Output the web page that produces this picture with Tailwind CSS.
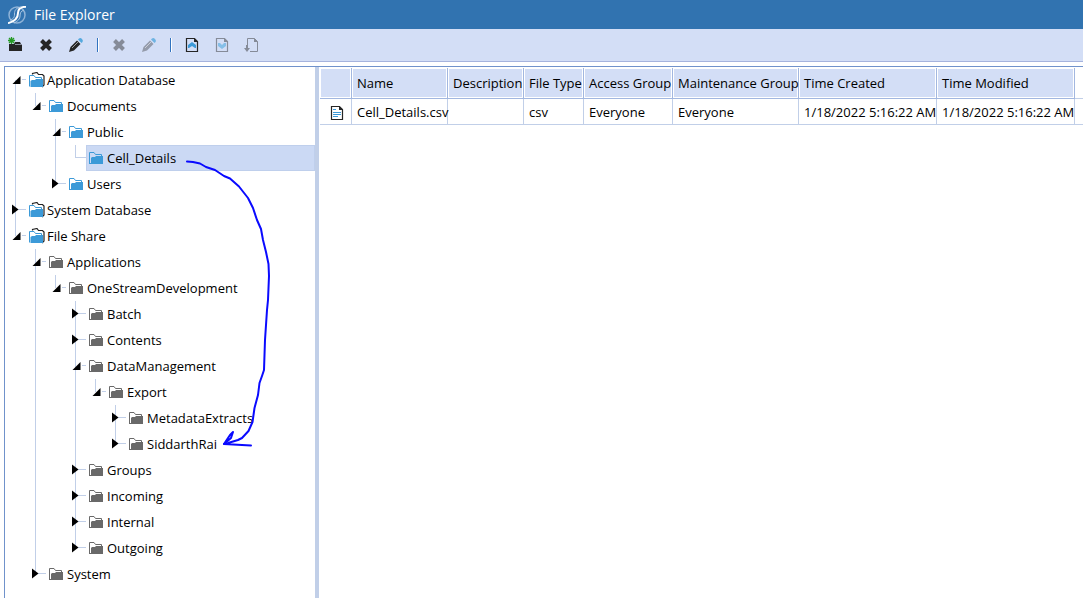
<!DOCTYPE html>
<html lang="en">

<head>
  <meta charset="UTF-8" />
  <meta name="viewport" content="width=device-width, initial-scale=1.0" />
  <title>File Explorer</title>
  <script src="https://cdn.jsdelivr.net/npm/@tailwindcss/browser@4"></script>
</head>

<body class="relative flex flex-col h-screen overflow-hidden bg-white text-black text-[13px] font-['Open_Sans','Noto_Sans',sans-serif]">
  <!-- shared icons -->
  <svg class="hidden">
    <symbol id="folder" viewBox="0 0 16 16">
      <path d="M.5 14V2.500H5L6.500 4.500H12.500V6M0 13.500h2" fill="none" stroke="currentColor" />
      <path d="M3 7h3l1-1h7v8H2V8z" fill="currentColor" />
    </symbol>
    <symbol id="folder-root" viewBox="0 0 16 16">
      <path d="M3.500 2.500V1.500L8 .5l1.500 2h4L15 4v9l-2 2" fill="none" stroke="#222" stroke-width="1.200" />
      <path d="M.5 14.500V3.500H5L6.500 5.500h6V8" fill="#fff" stroke="#3c9ad8" />
      <path d="M3 8h3l1-1h7v8H1.500V9z" fill="#3c9ad8" />
    </symbol>
    <symbol id="cross" viewBox="0 0 16 16">
      <path d="M3.500 3.500l9 9M12.500 3.500l-9 9" stroke="currentColor" stroke-width="4" />
    </symbol>
    <symbol id="pencil" viewBox="0 0 16 16">
      <path d="M1 15l1.500-5L9 3.500l3.500 3.500L6 13.500z" fill="currentColor" />
      <path d="M4 11l6-6" stroke="#fff" stroke-opacity=".55" />
      <path d="M10 2.500l1-1q1.500-1 3 .5t.500 3l-1 1z" fill="#55a9de" />
    </symbol>
    <symbol id="page" viewBox="0 0 16 16">
      <path d="M2.500 1.500h8l3 3v10h-11z" fill="none" stroke="currentColor" stroke-width="1.200" />
      <path d="M10 1v4h4z" fill="currentColor" />
    </symbol>
    <symbol id="open" viewBox="0 0 14 26">
      <path d="M10 12.500h4" stroke="#c1cfe8" />
      <path d="M8.500 9v8H.5z" />
    </symbol>
    <symbol id="closed" viewBox="0 0 14 26">
      <path d="M5 12.500h9" stroke="#c1cfe8" />
      <path d="M0 7.500v10l6.500-5z" />
    </symbol>
    <symbol id="leaf" viewBox="0 0 14 26">
      <path d="M3 12.500h11" stroke="#c1cfe8" />
    </symbol>
  </svg>

  <header class="flex items-center gap-2 h-[29px] shrink-0 pl-2 bg-[#3173b0] text-white">
    <svg class="w-[18px] h-[18px]" viewBox="0 0 18 18" fill="none">
      <circle cx="9" cy="9" r="8" stroke="#8fb3d7" stroke-width="1.500" />
      <path d="M18 .8C12 .8 10 3 10 7S8 15 0 17.200" stroke="#fff" stroke-width="2" />
      <path d="M13 1C8 2 6.500 4 6.500 8s-1.500 5-4.500 6M16 4c-3 1-4 3-4 6s-2 5-6 7" stroke="#a9c6e2" />
    </svg>
    <h1 class="text-[14px] leading-5">File Explorer</h1>
  </header>

  <div class="flex items-center h-[33px] shrink-0 pl-px bg-[#d3def6] border-b border-[#a6b3dd] text-[#252525]" role="toolbar" aria-label="File actions">
    <button class="flex w-[30px] justify-center" aria-label="New folder">
      <svg class="w-4 h-4" viewBox="0 0 16 16">
        <path d="M1 14V7h5l1-2h5l1 2h1v7z" fill="currentColor" />
        <path d="M7 7.500h7" stroke="#d3def6" stroke-width=".6" />
        <path d="M3.500 0v7M0 3.500h7M1 1l5 5M6 1L1 6" stroke="#259a25" stroke-width="1.300" />
      </svg>
    </button>
    <button class="flex w-[30px] justify-center" aria-label="Delete folder"><svg class="w-4 h-4"><use href="#cross" /></svg></button>
    <button class="flex w-[30px] justify-center" aria-label="Rename folder"><svg class="w-4 h-4"><use href="#pencil" /></svg></button>
    <span class="h-[14px] w-[2px] ml-[6px] mr-[5px] border-l border-[#3173c0] bg-white"></span>
    <button class="flex w-[30px] justify-center text-[#858b98]" aria-label="Delete file"><svg class="w-4 h-4"><use href="#cross" /></svg></button>
    <button class="flex w-[30px] justify-center text-[#858b98]" aria-label="Rename file"><svg class="w-4 h-4 opacity-80"><use href="#pencil" /></svg></button>
    <span class="h-[14px] w-[2px] ml-[6px] mr-[5px] border-l border-[#3173c0] bg-white"></span>
    <button class="flex w-[30px] justify-center" aria-label="Upload file">
      <svg class="w-4 h-4"><use href="#page" /><path d="M4 10V8l4-3 4 3v3H11L8 9l-3 2H4z" fill="#3c9ad8" /></svg>
    </button>
    <button class="flex w-[30px] justify-center text-[#858b98]" aria-label="Download file">
      <svg class="w-4 h-4"><use href="#page" /><path d="M4 6h2l2 2 2-2h2v3l-4 3-4-3z" fill="#85bfe8" /></svg>
    </button>
    <button class="flex w-[30px] justify-center text-[#858b98]" aria-label="Download zipped file">
      <svg class="w-4 h-4" viewBox="0 0 16 16">
        <path d="M3.500 8V1.500h7l3 3v10H6" fill="none" stroke="currentColor" />
        <path d="M10 1v4h4zM2 8h2v3h2l-3 4-3-4h2z" fill="currentColor" />
      </svg>
    </button>
  </div>

  <main class="flex grow min-h-0 mt-1 ml-1 border-t border-l border-[#7092cb]">
    <nav class="w-[310px] shrink-0" aria-label="Folders">
      <ul id="tree"></ul>
    </nav>
    <div class="w-1 shrink-0 bg-[#c1cfe8]"></div>
    <section class="grow min-w-0 pt-px pl-px overflow-hidden">
      <table class="w-full table-fixed border-separate border-spacing-0 text-left whitespace-nowrap">
        <colgroup>
          <col class="w-8" />
          <col class="w-24" />
          <col class="w-[76px]" />
          <col class="w-[60px]" />
          <col class="w-[89px]" />
          <col class="w-[126px]" />
          <col class="w-[138px]" />
          <col class="w-[138px]" />
          <col />
        </colgroup>
        <thead>
          <tr id="head"></tr>
        </thead>
        <tbody>
          <tr id="file"></tr>
        </tbody>
      </table>
    </section>
  </main>

  <!-- hand-drawn arrow from Cell_Details to SiddarthRai -->
  <svg class="absolute top-0 left-0 w-[320px] h-[460px] pointer-events-none" fill="none" stroke="#0a0aff" stroke-width="2" stroke-linejoin="round" stroke-linecap="round">
    <path d="M187 161.500L193 162l7 1.500 6 3.500 9 3 9 6 6 2.500 9 8 9 11.500 5 10 4 12 4 9 2 11 3 12 2.500 12 .5 12-1 24-1 10-2 30-1 30-2 6-2.500 7-1.500 12-3.500 13-2 14-4 9-6.500 7-4 2-10 3-4 1 27 1.500" />
    <path d="M233 432l-3 3-6 9 7-6 2-6" />
  </svg>

  <script>
    const root = (name, children, open = true) => ({ name, icon: '#folder-root', children, open });
    const blue = (name, children, open = true) => ({ name, color: 'text-[#3c9ad8]', children, open });
    const gray = (name, children = [], open = children.length > 0) => ({ name, children, open });

    const folders = [
      root('Application Database', [
        blue('Documents', [
          blue('Public', [{ name: 'Cell_Details', color: 'text-[#3c9ad8]', selected: true }]),
          blue('Users', [], false),
        ]),
      ]),
      root('System Database', [], false),
      root('File Share', [
        gray('Applications', [
          gray('OneStreamDevelopment', [
            gray('Batch'),
            gray('Contents'),
            gray('DataManagement', [
              gray('Export', [gray('MetadataExtracts'), gray('SiddarthRai')]),
            ]),
            gray('Groups'),
            gray('Incoming'),
            gray('Internal'),
            gray('Outgoing'),
          ]),
        ]),
        gray('System'),
      ]),
    ];

    function renderNode(node, index, list, depth) {
      // the guide line stops at the last sibling and starts at the first root
      let guide = 'before:top-0 before:h-full';
      if (index === list.length - 1) guide = 'before:top-0 before:h-[13px]';
      else if (depth === 0 && index === 0) guide = 'before:top-[13px] before:bottom-0';

      const arrow = !node.children ? '#leaf' : node.open ? '#open' : '#closed';
      const toggle = `<svg class="w-[14px] h-[26px]"><use href="${arrow}" /></svg>`;
      const children = node.children || [];
      return `
        <li class="relative before:absolute before:left-[10px] before:w-px before:bg-[#c1cfe8] ${guide}">
          <div class="relative flex h-[26px] pl-[7px]">
            ${node.children ? `<button aria-label="Toggle ${node.name}">${toggle}</button>` : toggle}
            <button class="flex items-center grow border pl-[2px] gap-[2px] text-left whitespace-nowrap ${node.selected ? 'bg-[#cbd9f4] border-[#bfcfec]' : 'border-transparent'}">
              <svg class="w-4 h-4 shrink-0 ${node.color || 'text-[#696969]'}"><use href="${node.icon || '#folder'}" /></svg>
              <span class="pt-[2px]">${node.name}</span>
            </button>
          </div>
          ${children.length ? `<ul class="ml-5">${children.map((n, i, l) => renderNode(n, i, l, depth + 1)).join('')}</ul>` : ''}
        </li>`;
    }

    document.getElementById('tree').innerHTML = folders.map((n, i, l) => renderNode(n, i, l, 0)).join('');

    const columns = ['', 'Name', 'Description', 'File Type', 'Access Group', 'Maintenance Group', 'Time Created', 'Time Modified'];
    const fileIcon = `
      <svg class="w-4 h-4 ml-1" viewBox="0 0 16 16" fill="none">
        <path d="M2.500 1.500h8l3 3v10h-11z" stroke="#252525" stroke-width="1.200" />
        <path d="M10 1v4h4z" fill="#252525" />
        <path d="M4 4.500h3M4 7.500h8M4 9.500h8M4 11.500h5" stroke="#3c9ad8" />
      </svg>`;
    const file = [fileIcon, 'Cell_Details.csv', '', 'csv', 'Everyone', 'Everyone', '1/18/2022 5:16:22 AM', '1/18/2022 5:16:22 AM'];

    document.getElementById('head').innerHTML = columns.map(c =>
      `<th class="h-[31px] p-0 font-normal border-r border-b border-[#a2b7e0]"><div class="flex items-center h-[30px] pl-1 pt-[2px] border border-white bg-[#d3def6]">${c}</div></th>`
    ).join('') + '<td class="border-b border-[#c1cfe8]"></td>';

    document.getElementById('file').innerHTML = file.map(c =>
      `<td class="h-[26px] p-0 pl-[5px] pt-[2px] border-r border-b border-[#c1cfe8]">${c}</td>`
    ).join('') + '<td class="border-b border-[#c1cfe8]"></td>';
  </script>
</body>

</html>
